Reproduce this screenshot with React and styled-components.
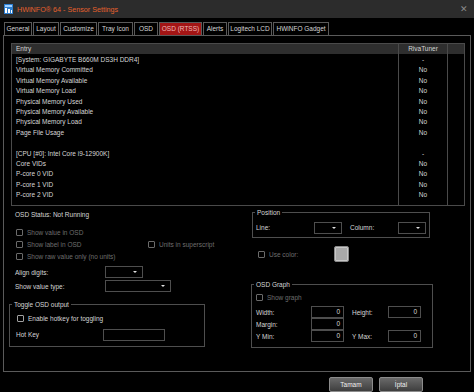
import styled, { createGlobalStyle } from "styled-components";

const Global = createGlobalStyle`
  html, body {
    margin: 0;
    padding: 0;
    background: #000;
  }
  body {
    font-family: "Liberation Sans", Arial, sans-serif;
    font-size: 6.5px;
    color: #d6d6d6;
  }
`;

const Window = styled.div`
  width: 474px;
  height: 392px;
  background: #000;
  overflow: hidden;
  display: flex;
  flex-direction: column;
`;

const TitleBar = styled.div`
  height: 18px;
  background: #2c2c2c;
  display: flex;
  align-items: center;
  padding: 0 4px;
  gap: 4px;
`;

const Title = styled.span`
  color: #e5602c;
  font-size: 7.2px;
  flex: 1;
`;

const Close = styled.span`
  color: #8a8a8a;
  font-size: 9px;
  padding-right: 2px;
`;

const Tabs = styled.div`
  display: flex;
  margin: 4px 0 0 4px;
  height: 13px;
`;

const Tab = styled.div`
  flex: none;
  width: ${(p) => p.$w}px;
  box-sizing: border-box;
  border: 1px solid #5a5a5a;
  border-bottom: none;
  margin-right: 1px;
  text-align: center;
  white-space: nowrap;
  line-height: 12px;
  color: ${(p) => (p.$active ? "#f2b8b8" : "#d6d6d6")};
  background: ${(p) => (p.$active ? "#a31515" : "#000")};
`;

const Panel = styled.div`
  margin: 0 3px 0 3px;
  border: 1px solid #5a5a5a;
  height: 337px;
  padding: 7px 7px 0 7px;
  box-sizing: border-box;
  display: flex;
  flex-direction: column;
`;

const Table = styled.div`
  border: 1px solid #4a4a4a;
  width: 452px;
  height: 161px;
  display: grid;
  grid-template-columns: 387px 49px 1fr;
  grid-template-rows: 10px 1fr;
`;

const HeadCell = styled.div`
  background: #2e2e2e;
  line-height: 10px;
  padding-left: ${(p) => (p.$center ? "0" : "4px")};
  text-align: ${(p) => (p.$center ? "center" : "left")};
  border-right: 1px solid ${(p) => (p.$line ? "#4a4a4a" : "transparent")};
`;

const Col = styled.div`
  border-right: 1px solid ${(p) => (p.$line ? "#4a4a4a" : "transparent")};
  padding-top: 1px;
  text-align: ${(p) => (p.$center ? "center" : "left")};
  padding-left: ${(p) => (p.$center ? "0" : "4px")};
`;

const Cell = styled.div`
  height: 10.4px;
  line-height: 10.4px;
  white-space: nowrap;
`;

const Lower = styled.div`
  display: flex;
  margin-top: 2px;
`;

const LeftCol = styled.div`
  width: 241px;
  display: flex;
  flex-direction: column;
`;

const RightCol = styled.div`
  display: flex;
  flex-direction: column;
`;

const Line = styled.div`
  height: ${(p) => p.$h || 12}px;
  flex: none;
  display: flex;
  align-items: center;
  white-space: nowrap;
  padding-left: ${(p) => p.$pl || 0}px;
`;

const Box = styled.span`
  width: 5px;
  height: 5px;
  border: 1px solid ${(p) => (p.$dim ? "#6a6a6a" : "#a0a0a0")};
  border-radius: 1px;
  margin-right: 4px;
  flex: none;
`;

const Check = styled.span`
  display: inline-flex;
  align-items: center;
  width: ${(p) => (p.$w ? `${p.$w}px` : "auto")};
  color: ${(p) => (p.$dim ? "#6e6e6e" : "#d6d6d6")};
`;

const Label = styled.span`
  width: ${(p) => p.$w}px;
  padding-left: ${(p) => p.$pl || 0}px;
  box-sizing: border-box;
  flex: none;
`;

const Select = styled.div`
  width: ${(p) => p.$w}px;
  height: 12px;
  border: 1px solid #4e4e4e;
  box-sizing: border-box;
  position: relative;
  flex: none;
  &::after {
    content: "";
    position: absolute;
    right: 5px;
    top: 4px;
    border-left: 2px solid transparent;
    border-right: 2px solid transparent;
    border-top: 2px solid #e0e0e0;
  }
`;

const Input = styled.div`
  width: ${(p) => p.$w}px;
  height: 12px;
  border: 1px solid #4e4e4e;
  box-sizing: border-box;
  text-align: right;
  padding-right: 3px;
  line-height: 10px;
  flex: none;
`;

const Group = styled.fieldset`
  margin: 0 0 0 ${(p) => p.$ml || 0}px;
  border: 1px solid #4e4e4e;
  padding: 0 3px;
  width: ${(p) => p.$w}px;
  height: ${(p) => p.$h}px;
  box-sizing: border-box;
  display: flex;
  flex-direction: column;
  legend {
    padding: 0 2px;
    margin-left: -1px;
    line-height: 9px;
  }
`;

const Swatch = styled.div`
  width: 15px;
  height: 16px;
  box-sizing: border-box;
  border: 1px solid #8a8a8a;
  border-radius: 2px;
  background: #a9a9a9;
  box-shadow: inset 0 0 0 1px #c8c8c8;
  margin-left: 38px;
`;

const Footer = styled.div`
  display: flex;
  gap: 6px;
  padding: 5px 0 0 329px;
`;

const Button = styled.div`
  width: 44px;
  height: 15px;
  box-sizing: border-box;
  border: 1px solid #8c8c8c;
  border-radius: 2px;
  background: linear-gradient(#6a6a6a, #3e3e3e);
  color: #f0f0f0;
  text-align: center;
  line-height: 13px;
`;

const tabs = [
  ["General", 28],
  ["Layout", 26],
  ["Customize", 37],
  ["Tray Icon", 35],
  ["OSD", 24],
  ["OSD (RTSS)", 43],
  ["Alerts", 24],
  ["Logitech LCD", 44],
  ["HWiNFO Gadget", 56],
];

const rows = [
  ["[System: GIGABYTE B660M DS3H DDR4]", "-"],
  ["Virtual Memory Committed", "No"],
  ["Virtual Memory Available", "No"],
  ["Virtual Memory Load", "No"],
  ["Physical Memory Used", "No"],
  ["Physical Memory Available", "No"],
  ["Physical Memory Load", "No"],
  ["Page File Usage", "No"],
  ["", ""],
  ["[CPU [#0]: Intel Core i9-12900K]", "-"],
  ["Core VIDs", "No"],
  ["P-core 0 VID", "No"],
  ["P-core 1 VID", "No"],
  ["P-core 2 VID", "No"],
];

const AppIcon = () => (
  <svg width="9" height="10" viewBox="0 0 9 10">
    <rect x="0" y="0" width="9" height="10" fill="#2f7fd0" />
    <rect x="1" y="1" width="7" height="2" fill="#9fd0ff" />
    <rect x="1" y="4" width="2" height="5" fill="#fff" />
    <rect x="4" y="5" width="2" height="4" fill="#fff" />
    <rect x="7" y="6" width="1" height="3" fill="#fff" />
  </svg>
);

export default function App() {
  return (
    <Window>
      <Global />
      <TitleBar>
        <AppIcon />
        <Title>HWiNFO® 64 - Sensor Settings</Title>
        <Close>✕</Close>
      </TitleBar>
      <Tabs>
        {tabs.map(([t, w]) => (
          <Tab key={t} $w={w} $active={t === "OSD (RTSS)"}>
            {t}
          </Tab>
        ))}
      </Tabs>
      <Panel>
        <Table>
          <HeadCell $line>Entry</HeadCell>
          <HeadCell $center $line>RivaTuner</HeadCell>
          <HeadCell />
          <Col $line>
            {rows.map(([name], i) => (
              <Cell key={i}>{name}</Cell>
            ))}
          </Col>
          <Col $center $line>
            {rows.map(([, v], i) => (
              <Cell key={i}>{v}</Cell>
            ))}
          </Col>
          <Col />
        </Table>
        <Lower>
          <LeftCol>
            <Line $h={12} $pl={4}>OSD Status: Not Running</Line>
            <Line $h={6} />
            <Line $pl={5}>
              <Check $dim><Box $dim />Show value in OSD</Check>
            </Line>
            <Line $pl={5}>
              <Check $dim $w={132}><Box $dim />Show label in OSD</Check>
              <Check $dim><Box $dim />Units in superscript</Check>
            </Line>
            <Line $pl={5}>
              <Check $dim><Box $dim />Show raw value only (no units)</Check>
            </Line>
            <Line $h={3} />
            <Line $h={14} $pl={4}>
              <Label $w={90}>Align digits:</Label>
              <Select $w={38} />
            </Line>
            <Line $h={14} $pl={4}>
              <Label $w={90}>Show value type:</Label>
              <Select $w={66} />
            </Line>
            <Line $h={7} />
            <Group $w={196} $h={47} $ml={-2}>
              <legend>Toggle OSD output</legend>
              <Line $h={3} />
              <Line $h={12} $pl={4}>
                <Check><Box />Enable hotkey for toggling</Check>
              </Line>
              <Line $h={4} />
              <Line $h={13} $pl={3}>
                <Label $w={87}>Hot Key</Label>
                <Input $w={62} />
              </Line>
            </Group>
          </LeftCol>
          <RightCol>
            <Group $w={178} $h={30}>
              <legend>Position</legend>
              <Line $h={3} />
              <Line $h={15}>
                <Label $w={58}>Line:</Label>
                <Select $w={28} />
                <Label $w={56} $pl={8}>Column:</Label>
                <Select $w={28} />
              </Line>
            </Group>
            <Line $h={8} />
            <Line $h={16} $pl={6}>
              <Check $dim $w={38}><Box $dim />Use color:</Check>
              <Swatch />
            </Line>
            <Line $h={18} />
            <Group $w={182} $h={68} $ml={-1}>
              <legend>OSD Graph</legend>
              <Line $h={2} />
              <Line $h={12} $pl={1}>
                <Check $dim><Box $dim />Show graph</Check>
              </Line>
              <Line $h={3} />
              <Line $h={12} $pl={1}>
                <Label $w={55}>Width:</Label>
                <Input $w={33}>0</Input>
                <Label $w={44} $pl={8}>Height:</Label>
                <Input $w={33}>0</Input>
              </Line>
              <Line $h={12} $pl={1}>
                <Label $w={55}>Margin:</Label>
                <Input $w={33}>0</Input>
              </Line>
              <Line $h={12} $pl={1}>
                <Label $w={55}>Y Min:</Label>
                <Input $w={33}>0</Input>
                <Label $w={44} $pl={8}>Y Max:</Label>
                <Input $w={33}>0</Input>
              </Line>
            </Group>
          </RightCol>
        </Lower>
      </Panel>
      <Footer>
        <Button>Tamam</Button>
        <Button>İptal</Button>
      </Footer>
    </Window>
  );
}
